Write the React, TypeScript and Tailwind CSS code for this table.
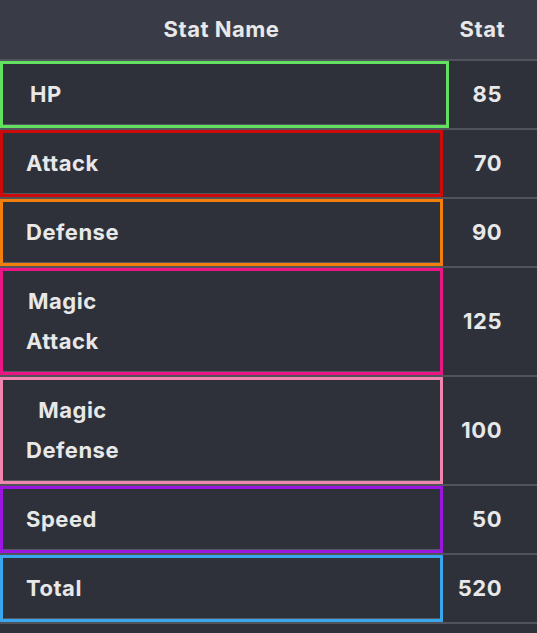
import React from "react";

type Row = { lines: string[]; stat: number; color: string; tall?: boolean; wide?: boolean };

const rows: Row[] = [
  { lines: ["HP"], stat: 85, color: "border-[#63e05f]", wide: true },
  { lines: ["Attack"], stat: 70, color: "border-[#cc0a0a]" },
  { lines: ["Defense"], stat: 90, color: "border-[#f27f0c]" },
  { lines: ["Magic", "Attack"], stat: 125, color: "border-[#ec1586]", tall: true },
  { lines: ["Magic", "Defense"], stat: 100, color: "border-[#ef86ad]", tall: true },
  { lines: ["Speed"], stat: 50, color: "border-[#9b16e0]" },
  { lines: ["Total"], stat: 520, color: "border-[#3aa6ee]" },
];

export default function App() {
  return (
    <div
      className="w-[537px] h-[633px] bg-[#2e313a] text-[#e8e8e8] font-bold text-[22px] tracking-[0.5px] overflow-hidden"
      style={{ fontFamily: "Inter, 'Noto Sans', sans-serif" }}
    >
      <div className="flex h-[61px] bg-[#393c46] border-b-2 border-[#50535b]">
        <div className="w-[443px] flex items-center justify-center">Stat Name</div>
        <div className="flex-1 flex items-center justify-end pr-[32px]">Stat</div>
      </div>
      {rows.map((r, i) => (
        <div key={i} className="flex border-b-2 border-[#50535b]">
          <div className={r.wide ? "w-[449px]" : "w-[443px]"}>
            <div className={`border-[3px] ${r.color} ${r.tall ? "h-[107px]" : "h-[67px]"}`}>
              <div className={`h-full border-b border-[#55585f] flex items-center ${r.wide ? "pl-[27px]" : "pl-[23px]"}`}>
                <div className="inline-flex flex-col items-center leading-[40px]">
                  {r.lines.map((l, j) => (
                    <span key={j}>{l}</span>
                  ))}
                </div>
              </div>
            </div>
          </div>
          <div className="flex-1 flex items-center justify-end pr-[35px]">{r.stat}</div>
        </div>
      ))}
    </div>
  );
}
